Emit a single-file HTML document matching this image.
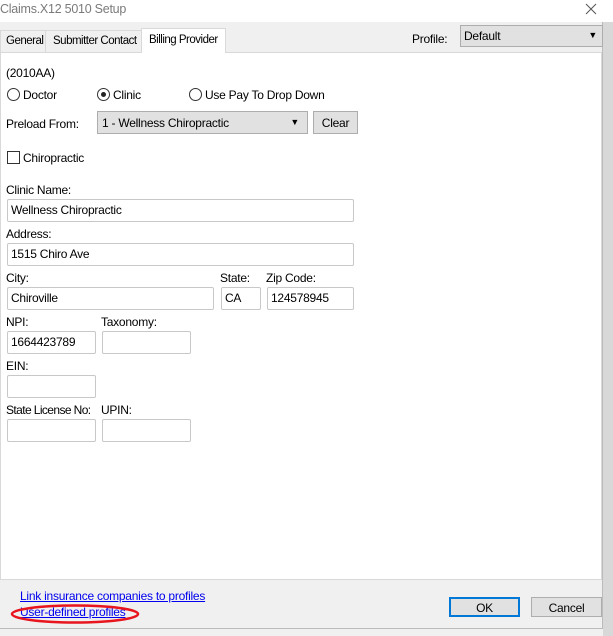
<!DOCTYPE html>
<html><head><style>
*{box-sizing:border-box;margin:0;padding:0}
body{width:613px;height:636px;position:relative;background:#f0f0f0;font-family:"Liberation Sans",sans-serif;font-size:12px;letter-spacing:-0.25px;color:#000;overflow:hidden}
.a{position:absolute;white-space:nowrap}
.in{position:absolute;background:#fff;border:1px solid #c8c8c8;border-radius:2px;padding:3px 0 0 3px;height:23px}
.rad{position:absolute;width:13px;height:13px;border:1px solid #333;border-radius:50%;background:#fff}
a{color:#0000ee}
.tab{letter-spacing:-0.5px;font-size:11.5px}
</style></head><body>
<div class="a" style="left:0;top:0;width:613px;height:22px;background:#fff"></div>
<div class="a" style="left:0;top:2px;color:#7a7a7a;font-size:12.5px">Claims.X12 5010 Setup</div>
<svg class="a" style="left:585px;top:3px" width="12" height="12"><path d="M1 1L11 11M11 1L1 11" stroke="#555" stroke-width="1"/></svg>
<div class="a" style="left:603px;top:22px;width:10px;height:614px;background:#d8d8d8"></div>
<div class="a" style="left:0;top:22px;width:603px;height:607px;background:#f0f0f0;border-right:1px solid #bbb;border-bottom:1px solid #bbb"></div>
<!-- tabs -->
<div class="a tab" style="left:0;top:30px;width:46px;height:23px;border:1px solid #d9d9d9;background:#f0f0f0;padding:4px 0 0 5px">General</div>
<div class="a tab" style="left:45px;top:30px;width:97px;height:23px;border:1px solid #d9d9d9;background:#f0f0f0;padding:4px 0 0 7px">Submitter Contact</div>
<div class="a" style="left:0;top:52px;width:602px;height:528px;background:#fff;border:1px solid #d9d9d9"></div>
<div class="a tab" style="left:141px;top:28px;width:85px;height:25px;border:1px solid #d9d9d9;border-bottom:none;background:#fff;padding:5px 0 0 7px">Billing Provider</div>
<div class="a" style="left:412px;top:32px">Profile:</div>
<div class="a" style="left:460px;top:25px;width:143px;height:22px;background:#e1e1e1;border:1px solid #adadad;padding:3px 0 0 3px">Default<span style="position:absolute;right:5px;top:4px;font-size:9px">▼</span></div>
<div class="a" style="left:6px;top:66px">(2010AA)</div>
<div class="rad" style="left:7px;top:88px"></div><div class="a" style="left:23px;top:88px">Doctor</div>
<div class="rad" style="left:97px;top:88px"><div style="position:absolute;left:3px;top:3px;width:5px;height:5px;border-radius:50%;background:#222"></div></div><div class="a" style="left:113px;top:88px">Clinic</div>
<div class="rad" style="left:189px;top:88px"></div><div class="a" style="left:205px;top:88px">Use Pay To Drop Down</div>
<div class="a" style="left:6px;top:117px">Preload From:</div>
<div class="a" style="left:97px;top:111px;width:211px;height:23px;background:#e1e1e1;border:1px solid #adadad;padding:4px 0 0 4px">1 - Wellness Chiropractic<span style="position:absolute;right:8px;top:5px;font-size:9px">▼</span></div>
<div class="a" style="left:313px;top:111px;width:45px;height:23px;background:#e1e1e1;border:1px solid #adadad;padding:4px 0 0 0;text-align:center">Clear</div>
<div class="a" style="left:7px;top:151px;width:13px;height:13px;border:1px solid #333;background:#fff"></div>
<div class="a" style="left:23px;top:151px">Chiropractic</div>
<div class="a" style="left:6px;top:183px">Clinic Name:</div>
<div class="in" style="left:7px;top:199px;width:347px">Wellness Chiropractic</div>
<div class="a" style="left:6px;top:227px">Address:</div>
<div class="in" style="left:7px;top:243px;width:347px">1515 Chiro Ave</div>
<div class="a" style="left:6px;top:271px">City:</div><div class="a" style="left:220px;top:271px">State:</div><div class="a" style="left:266px;top:271px">Zip Code:</div>
<div class="in" style="left:7px;top:287px;width:207px">Chiroville</div>
<div class="in" style="left:221px;top:287px;width:40px">CA</div>
<div class="in" style="left:267px;top:287px;width:87px">124578945</div>
<div class="a" style="left:6px;top:315px">NPI:</div><div class="a" style="left:101px;top:315px">Taxonomy:</div>
<div class="in" style="left:7px;top:331px;width:89px">1664423789</div>
<div class="in" style="left:102px;top:331px;width:89px"></div>
<div class="a" style="left:6px;top:359px">EIN:</div>
<div class="in" style="left:7px;top:375px;width:89px"></div>
<div class="a" style="left:6px;top:403px;letter-spacing:-0.6px">State License No:</div><div class="a" style="left:101px;top:403px">UPIN:</div>
<div class="in" style="left:7px;top:419px;width:89px"></div>
<div class="in" style="left:102px;top:419px;width:89px"></div>
<div class="a" style="left:20px;top:589px"><a href="#" style="color:#0000ee">Link insurance companies to profiles</a></div>
<div class="a" style="left:20px;top:605px"><a href="#" style="color:#0000ee">User-defined profiles</a></div>
<svg class="a" style="left:0;top:600px" width="150" height="30"><ellipse cx="75" cy="14" rx="63" ry="8.5" fill="none" stroke="#e8141e" stroke-width="2.5"/></svg>
<div class="a" style="left:449px;top:597px;width:71px;height:20px;background:#e1e1e1;border:2px solid #0078d7;text-align:center;padding-top:2px">OK</div>
<div class="a" style="left:531px;top:597px;width:71px;height:20px;background:#e1e1e1;border:1px solid #adadad;text-align:center;padding-top:3px">Cancel</div>
</body></html>
